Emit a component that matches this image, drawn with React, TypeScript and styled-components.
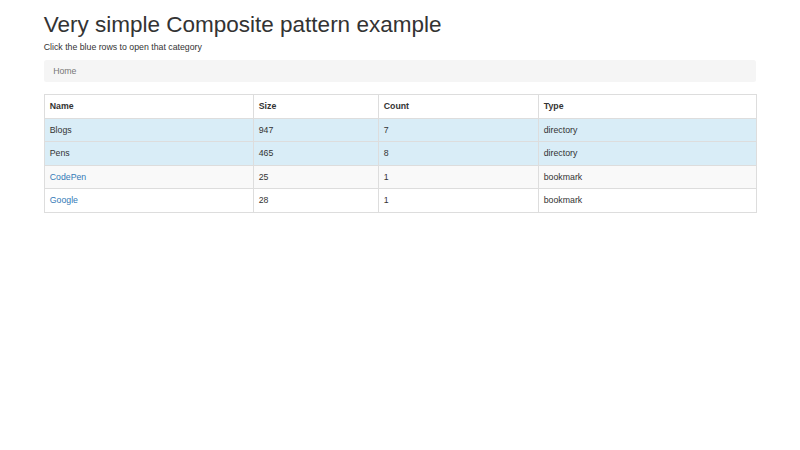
import React from 'react';
import styled, { createGlobalStyle } from 'styled-components';

// The reference is a Bootstrap 3 page shot at 1280px and scaled to 800px,
// so every measure below is the Bootstrap value times 0.625.

const GlobalStyle = createGlobalStyle`
  html, body {
    margin: 0;
    padding: 0;
    background: #fff;
  }
  body {
    font-family: "Liberation Sans", Arial, sans-serif;
    font-size: 8.75px;
    line-height: 12.5px;
    color: #333;
  }
`;

const Container = styled.div`
  width: 712.5px;
  margin: 0 auto;
`;

const Title = styled.h1`
  margin: 12.5px 0 3.75px;
  font-size: 22.5px;
  line-height: 24.75px;
  font-weight: 500;
  color: #333;
`;

const Lead = styled.p`
  margin: 0 0 6.5px;
`;

const Breadcrumb = styled.ol`
  list-style: none;
  margin: 0 0 12.5px;
  padding: 4.5px 9.4px;
  background: #f5f5f5;
  border-radius: 2.5px;
`;

const Crumb = styled.li`
  display: inline-block;
  color: #777;
`;

const Table = styled.table`
  width: 100%;
  table-layout: fixed;
  border-collapse: collapse;
  border-spacing: 0;
  border: 1px solid #ddd;
`;

const HeadCell = styled.th<{ $w: number }>`
  box-sizing: border-box;
  width: ${(p) => p.$w}px;
  text-align: left;
  font-weight: bold;
  padding: 5px;
  border: 1px solid #ddd;
  border-bottom-width: 1.5px;
  vertical-align: bottom;
`;

const Row = styled.tr<{ $tone: 'info' | 'striped' | 'plain' }>`
  background: ${(p) =>
    p.$tone === 'info' ? '#d9edf7' : p.$tone === 'striped' ? '#f9f9f9' : '#fff'};
`;

const Cell = styled.td`
  padding: 5px;
  border: 1px solid #ddd;
  vertical-align: top;
`;

const Link = styled.a`
  color: #337ab7;
  text-decoration: none;
`;

type Item = { name: string; size: number; count: number; type: 'directory' | 'bookmark' };

const items: Item[] = [
  { name: 'Blogs', size: 947, count: 7, type: 'directory' },
  { name: 'Pens', size: 465, count: 8, type: 'directory' },
  { name: 'CodePen', size: 25, count: 1, type: 'bookmark' },
  { name: 'Google', size: 28, count: 1, type: 'bookmark' },
];

const columns = [
  { label: 'Name', w: 209 },
  { label: 'Size', w: 125 },
  { label: 'Count', w: 160 },
  { label: 'Type', w: 218 },
];

export default function App() {
  return (
    <>
      <GlobalStyle />
      <Container>
        <Title>Very simple Composite pattern example</Title>
        <Lead>Click the blue rows to open that category</Lead>
        <Breadcrumb>
          <Crumb>Home</Crumb>
        </Breadcrumb>
        <Table>
          <thead>
            <tr>
              {columns.map((c) => (
                <HeadCell key={c.label} $w={c.w}>
                  {c.label}
                </HeadCell>
              ))}
            </tr>
          </thead>
          <tbody>
            {items.map((item, i) => (
              <Row
                key={item.name}
                $tone={item.type === 'directory' ? 'info' : i % 2 === 0 ? 'striped' : 'plain'}
              >
                <Cell>
                  {item.type === 'bookmark' ? <Link href="#">{item.name}</Link> : item.name}
                </Cell>
                <Cell>{item.size}</Cell>
                <Cell>{item.count}</Cell>
                <Cell>{item.type}</Cell>
              </Row>
            ))}
          </tbody>
        </Table>
      </Container>
    </>
  );
}
